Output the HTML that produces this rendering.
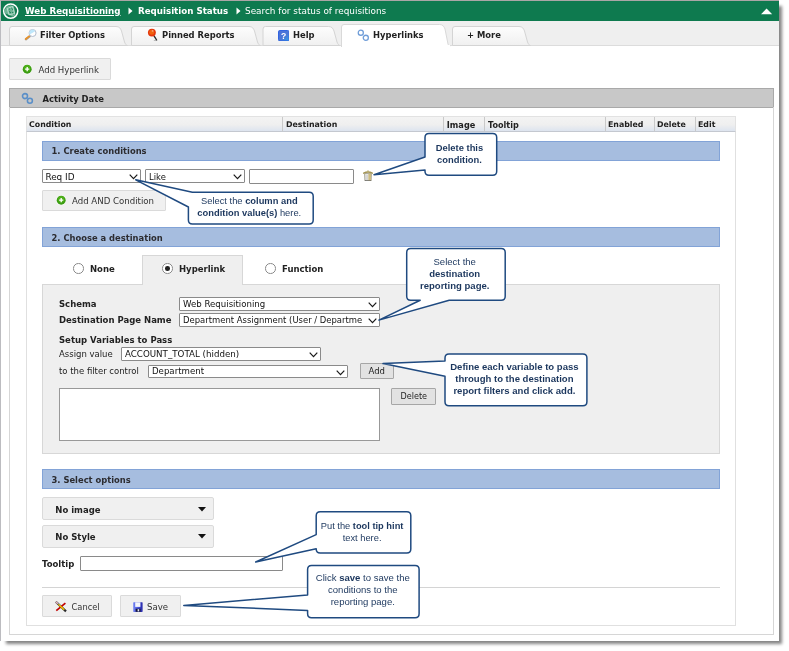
<!DOCTYPE html>
<html>
<head>
<meta charset="utf-8">
<title>Web Requisitioning - Requisition Status</title>
<style>
html,body{margin:0;padding:0;}
body{width:789px;height:651px;background:#fff;position:relative;overflow:hidden;font-family:"DejaVu Sans","Liberation Sans",sans-serif;font-size:8.4px;color:#222;}
#root{position:absolute;left:0;top:0;width:789px;height:651px;overflow:hidden;will-change:transform;}
.a{position:absolute;box-sizing:border-box;}
.t{position:absolute;white-space:nowrap;line-height:12px;height:12px;}
.b{font-weight:bold;}
#win{left:0;top:0;width:779px;height:641px;background:#fff;box-shadow:4.5px 4.5px 3px -1.5px #858585;border-top:1px solid #aaa6a6;border-left:1px solid #bcbcc0;}
#green{left:1px;top:1px;width:778px;height:20px;background:#0e7a4f;}
#strip{left:1px;top:21px;width:778px;height:25px;background:#efefef;border-bottom:1px solid #dcdcdc;}
.btn{position:absolute;box-sizing:border-box;background:#f0f0f0;border:1px solid #dadada;border-radius:1px;}
.bar{position:absolute;box-sizing:border-box;background:#a6bddf;border:1px solid #82a3d7;left:42px;width:678px;height:20px;}
.sel{position:absolute;box-sizing:border-box;background:#fff;border:1px solid #8a8a8a;border-radius:1px;}
.sel svg{position:absolute;right:1.8px;top:3.5px;}
.co{position:absolute;font-family:"Liberation Sans",sans-serif;font-size:9.55px;line-height:12px;color:#1b365d;text-align:center;white-space:nowrap;}
.co b{color:#1b365d;}
.tb{font-size:8.38px;color:#222;}
.vs{top:117px;width:1px;height:14px;background:#c9c9c9;}
.th{top:119px;font-size:7.85px;color:#222;}
.r{font-size:8.6px;color:#333;}
.bt{font-size:8.37px;color:#2c2c30;}
.st{font-size:8.6px;color:#111;line-height:12px;}
.rt{font-size:8.5px;}
.lb{font-size:8.5px;}
.r2{font-size:8.5px;color:#222;}
.rad{position:absolute;box-sizing:border-box;width:10.5px;height:10.5px;border:1px solid #8a8a8a;border-radius:50%;background:#fff;}
.rad i{position:absolute;left:1.9px;top:1.9px;width:4.7px;height:4.7px;border-radius:50%;background:#222;}
</style>
</head>
<body>
<div id="root">
<div id="win" class="a"></div>
<div id="green" class="a"></div>
<div id="strip" class="a"></div>

<!-- header text -->
<svg class="a" style="left:2px;top:2px" width="18" height="18" viewBox="0 0 18 18"><circle cx="8.6" cy="9.1" r="5.9" fill="#6fb596"/><path d="M4.2 12.2 L9.5 14.6 L6 15 Z M12.6 5 L14.6 8.5 L13.8 12 Z M6.5 6.2 L8 7.4 M9.5 5.5 L11 8 M7 9.5 L9 11 M10.5 10 L11.5 12.5" fill="#0e7a4f" stroke="#0e7a4f" stroke-width="0.9"/><path d="M5.2 6.5 L10.5 4.6 L12.6 11.4 L7 12.8 Z" fill="none" stroke="#d9efe5" stroke-width="0.7"/><circle cx="8.7" cy="9.1" r="7.1" fill="none" stroke="#fff" stroke-width="1.5"/></svg>
<div class="t b" id="h1" style="left:25px;top:4.6px;font-size:8.72px;color:#fff;text-decoration:underline;">Web Requisitioning</div>
<div class="t b" id="h2" style="left:138px;top:4.6px;font-size:8.7px;color:#fff;">Requisition Status</div>
<div class="t" id="h3" style="left:245px;top:5.1px;font-size:8.9px;color:#fff;">Search for status of requisitions</div>
<svg class="a" style="left:128px;top:7px" width="5" height="8"><path d="M0.5 0.5 L4.5 4 L0.5 7.5 Z" fill="#fff"/></svg>
<svg class="a" style="left:235.5px;top:7px" width="5" height="8"><path d="M0.5 0.5 L4.5 4 L0.5 7.5 Z" fill="#fff"/></svg>
<svg class="a" style="left:760.8px;top:7.7px" width="12" height="7"><path d="M0 6.2 L5.6 0.6 L11.2 6.2 Z" fill="#fff"/></svg>


<!-- tabs -->
<svg class="a" style="left:0;top:21px" width="779" height="26" viewBox="0 0 779 26">
 <defs><linearGradient id="tg" x1="0" y1="0" x2="0" y2="1"><stop offset="0" stop-color="#fdfdfd"/><stop offset="1" stop-color="#f0f0f0"/></linearGradient></defs>
 <g fill="url(#tg)" stroke="#d4d4d4" stroke-width="1">
  <path d="M9.5 24.5 L9.5 8.0 Q9.5 5.5 12.0 5.5 L116.0 5.5 C119.5 5.5 120.5 7.5 121.5 10.0 L124.5 21.0 C125.3 23.0 126.3 24.5 127.5 24.5 Z"/>
  <path d="M131.5 24.5 L131.5 8.0 Q131.5 5.5 134.0 5.5 L249.0 5.5 C252.5 5.5 253.5 7.5 254.5 10.0 L257.5 21.0 C258.3 23.0 259.3 24.5 260.5 24.5 Z"/>
  <path d="M263 24.5 L263 8.0 Q263 5.5 265.5 5.5 L328.5 5.5 C332.0 5.5 333.0 7.5 334.0 10.0 L337 21.0 C337.8 23.0 338.8 24.5 340 24.5 Z"/>
  <path d="M452.5 24.5 L452.5 8.0 Q452.5 5.5 455.0 5.5 L519.0 5.5 C522.5 5.5 523.5 7.5 524.5 10.0 L527.5 21.0 C528.3 23.0 529.3 24.5 530.5 24.5 Z"/>
 </g>
 <path d="M341.5 26.5 L341.5 6.0 Q341.5 3.5 344.0 3.5 L439.5 3.5 C443.0 3.5 444.0 5.5 445.0 8.0 L448 23.0 C448.8 25.0 449.8 26.5 451 26.5 Z" fill="#fff" stroke="#d9d9d9" stroke-width="1"/>
 <rect x="342" y="24" width="108" height="2" fill="#fff"/>
</svg>
<div class="t b tb" id="t1" style="left:40px;top:29px;">Filter Options</div>
<div class="t b tb" id="t2" style="left:162px;top:29px;">Pinned Reports</div>
<div class="t b tb" id="t3" style="left:293px;top:29px;">Help</div>
<div class="t b tb" id="t4" style="left:373px;top:29px;">Hyperlinks</div>
<div class="t b tb" id="t5" style="left:467px;top:29px;">+ More</div>
<!-- tab icons -->
<svg class="a" style="left:24px;top:28px" width="14" height="14" viewBox="0 0 14 14"><path d="M1.9 11.4 L5.6 8.4" stroke="#5a4a3a" stroke-width="2.2" stroke-linecap="round" opacity="0.5"/><path d="M1.7 11 L5.4 8.1" stroke="#e8922a" stroke-width="1.7" stroke-linecap="round"/><circle cx="8.6" cy="5" r="3.5" fill="#fff" stroke="#a9b7c9" stroke-width="0.9"/><path d="M5.7 6.6 A3.2 3.2 0 0 1 11.2 3.2 Z" fill="#bfe7fb"/></svg>
<svg class="a" style="left:146px;top:27px" width="13" height="15" viewBox="0 0 13 15"><path d="M7.8 13.4 L10 13.6" stroke="#bbb" stroke-width="1"/><path d="M8.2 9.2 L10.6 13" stroke="#2e2e2e" stroke-width="1.4" stroke-linecap="round"/><circle cx="5.9" cy="5.6" r="3.95" fill="#e4360d"/><circle cx="5.7" cy="5.2" r="2.5" fill="#f0620f"/><circle cx="6.6" cy="3.9" r="0.9" fill="#f7a27a"/></svg>
<svg class="a" style="left:277.5px;top:29.5px" width="11.4" height="11.4" viewBox="0 0 11.4 11.4"><defs><linearGradient id="hg" x1="0" y1="0" x2="1" y2="1"><stop offset="0" stop-color="#4a6fda"/><stop offset="0.6" stop-color="#4a78d6"/><stop offset="1" stop-color="#2ba4ea"/></linearGradient></defs><rect x="0.5" y="0.5" width="10.4" height="10.4" rx="1.2" fill="url(#hg)" stroke="#2f63e0" stroke-width="1"/><text x="5.7" y="9" font-family="Liberation Sans, sans-serif" font-weight="bold" font-size="8.6" fill="#fff" text-anchor="middle">?</text></svg>
<svg class="a lnk" style="left:357px;top:29px" width="13" height="13" viewBox="0 0 13 13"><circle cx="3.8" cy="3.7" r="2.55" fill="none" stroke="#6f9dd8" stroke-width="1.3"/><circle cx="8.8" cy="8.8" r="2.55" fill="none" stroke="#6f9dd8" stroke-width="1.3"/></svg>

<!-- add hyperlink -->
<div class="btn" style="left:9px;top:58px;width:102px;height:22px;"></div>
<svg class="a" style="left:22.1px;top:64.4px" width="10.4" height="10.4" viewBox="0 0 10.4 10.4"><circle cx="5.2" cy="5.2" r="5.2" fill="#fff" opacity="0.6"/><circle cx="5.2" cy="5.2" r="4.5" fill="#3b9c12"/><circle cx="5.2" cy="4.3" r="3.2" fill="#52b41c" opacity="0.8"/><path d="M5.2 3.1 V7.3 M3.1 5.2 H7.3" stroke="#fff" stroke-width="1.35"/></svg>
<div class="t r" id="addh" style="left:38.5px;top:63.7px;">Add Hyperlink</div>

<!-- activity date -->
<div class="a" style="left:9px;top:88px;width:765px;height:20px;background:#c8c8c8;border:1px solid #a9a9a9;"></div>
<div class="a" style="left:9px;top:107px;width:765px;height:528px;border:1px solid #d6d6d6;border-top:none;"></div>
<svg class="a lnk" style="left:21.4px;top:91.8px" width="13" height="13" viewBox="0 0 13 13"><circle cx="4" cy="4.1" r="2.5" fill="none" stroke="#5a8fc8" stroke-width="1.55"/><circle cx="8.9" cy="8.8" r="2.5" fill="none" stroke="#5a8fc8" stroke-width="1.55"/></svg>
<div class="t b" id="act" style="left:42.5px;top:92.5px;">Activity Date</div>

<!-- grid -->
<div class="a" style="left:26px;top:116px;width:710px;height:510px;border:1px solid #e0e0e0;"></div>
<div class="a" style="left:26px;top:116px;width:710px;height:16px;background:linear-gradient(#f3f3f3 0%,#efefef 55%,#dde4ef 100%);border:1px solid #e2e2e2;border-bottom:1px solid #c4c8d0;"></div>
<div class="a vs" style="left:282px;"></div><div class="a vs" style="left:443px;"></div><div class="a vs" style="left:484px;"></div><div class="a vs" style="left:605px;"></div><div class="a vs" style="left:654px;"></div><div class="a vs" style="left:695px;"></div>
<div class="t b th" id="c1" style="left:29px;">Condition</div>
<div class="t b th" id="c2" style="left:286px;">Destination</div>
<div class="t b th" id="c3" style="left:446.8px;font-size:8.2px;">Image</div>
<div class="t b th" id="c4" style="left:488px;font-size:8.1px;">Tooltip</div>
<div class="t b th" id="c5" style="left:608px;">Enabled</div>
<div class="t b th" id="c6" style="left:657px;">Delete</div>
<div class="t b th" id="c7" style="left:698px;">Edit</div>


<!-- section 1 -->
<div class="bar" style="top:140.8px;"></div>
<div class="t b bt" id="s1" style="left:51.5px;top:145.4px;">1. Create conditions</div>
<div class="sel" style="left:42px;top:169px;width:99px;height:14px;"><span class="t st" id="q1" style="left:2.4px;top:0.5px;font-size:8.9px;">Req ID</span><svg width="9" height="6" viewBox="0 0 9 6"><path d="M0.7 0.7 L4.5 4.7 L8.3 0.7" fill="none" stroke="#1a1a1a" stroke-width="1.2"/></svg></div>
<div class="sel" style="left:145px;top:169px;width:100px;height:14px;"><span class="t st" id="q2" style="left:3px;top:0.5px;font-size:8.45px;">Like</span><svg width="9" height="6" viewBox="0 0 9 6"><path d="M0.7 0.7 L4.5 4.7 L8.3 0.7" fill="none" stroke="#1a1a1a" stroke-width="1.2"/></svg></div>

<div class="sel" style="left:249px;top:168.5px;width:105px;height:15px;"></div>
<svg class="a" style="left:362.5px;top:169.7px" width="10" height="11.5" viewBox="0 0 10 11.5"><path d="M1.6 3.6 H8.4 L8.1 10.9 H1.9 Z" fill="#ececea" stroke="#85826f" stroke-width="0.7"/><path d="M5.4 3.8 H8.1 L7.8 10.5 H5.4 Z" fill="#cdbb7e"/><path d="M3.2 5 V10 M4.4 5 V10" stroke="#bdbdbd" stroke-width="0.6"/><path d="M0.7 3.1 Q5 0.9 9.3 3.1" fill="none" stroke="#a39454" stroke-width="1.5" stroke-linecap="round"/><path d="M4.2 1.1 H5.8" stroke="#b5a868" stroke-width="1.1"/><path d="M2 10.9 H8.1" stroke="#444" stroke-width="0.8"/></svg>
<div class="btn" style="left:42px;top:189.5px;width:124px;height:21.5px;"></div>
<svg class="a" style="left:56px;top:195px" width="10.4" height="10.4" viewBox="0 0 10.4 10.4"><circle cx="5.2" cy="5.2" r="5.2" fill="#fff" opacity="0.6"/><circle cx="5.2" cy="5.2" r="4.5" fill="#3b9c12"/><circle cx="5.2" cy="4.3" r="3.2" fill="#52b41c" opacity="0.8"/><path d="M5.2 3.1 V7.3 M3.1 5.2 H7.3" stroke="#fff" stroke-width="1.35"/></svg>
<div class="t r" id="addc" style="left:72px;top:194.8px;">Add AND Condition</div>

<!-- section 2 -->
<div class="bar" style="top:227px;"></div>
<div class="t b bt" id="s2" style="left:51.5px;top:231.7px;">2. Choose a destination</div>
<div class="a" style="left:42px;top:283.5px;width:678px;height:170px;background:#efefef;border:1px solid #d7d7d7;"></div>
<div class="a" style="left:142px;top:255px;width:101px;height:30px;background:#efefef;border:1px solid #d7d7d7;border-bottom:none;"></div>
<div class="rad" style="left:73px;top:263px;"></div>
<div class="rad" style="left:162px;top:263px;"><i></i></div>
<div class="rad" style="left:265px;top:263px;"></div>
<div class="t b rt" id="r1" style="left:90px;top:262.5px;">None</div>
<div class="t b rt" id="r2" style="left:179px;top:262.5px;">Hyperlink</div>
<div class="t b rt" id="r3" style="left:282px;top:262.5px;">Function</div>

<div class="t b lb" id="l1" style="left:59px;top:298px;">Schema</div>
<div class="t b lb" id="l2" style="left:59px;top:314px;">Destination Page Name</div>
<div class="t b lb" id="l3" style="left:59px;top:334px;">Setup Variables to Pass</div>
<div class="t r2" id="l4" style="left:59px;top:348px;">Assign value</div>
<div class="t r2" id="l5" style="left:59px;top:365px;">to the filter control</div>
<div class="sel" style="left:179px;top:297px;width:201px;height:13.5px;"><span class="t st" id="q3" style="left:3px;top:-0.5px;">Web Requisitioning</span><svg width="9" height="6" viewBox="0 0 9 6"><path d="M0.7 0.7 L4.5 4.7 L8.3 0.7" fill="none" stroke="#1a1a1a" stroke-width="1.2"/></svg></div>
<div class="sel" style="left:179px;top:313px;width:201px;height:13.5px;"><span class="t st" id="q4" style="left:3px;top:-0.5px;font-size:8.45px;width:179.5px;overflow:hidden;">Department Assignment (User / Departme</span><svg width="9" height="6" viewBox="0 0 9 6"><path d="M0.7 0.7 L4.5 4.7 L8.3 0.7" fill="none" stroke="#1a1a1a" stroke-width="1.2"/></svg></div>
<div class="sel" style="left:121px;top:347px;width:200px;height:13.5px;"><span class="t st" id="q5" style="left:3px;top:-0.2px;font-size:8.7px;">ACCOUNT_TOTAL (hidden)</span><svg width="9" height="6" viewBox="0 0 9 6"><path d="M0.7 0.7 L4.5 4.7 L8.3 0.7" fill="none" stroke="#1a1a1a" stroke-width="1.2"/></svg></div>
<div class="sel" style="left:148px;top:365px;width:200px;height:13px;"><span class="t st" id="q6" style="left:3px;top:-1.3px;">Department</span><svg width="9" height="6" viewBox="0 0 9 6"><path d="M0.7 0.7 L4.5 4.7 L8.3 0.7" fill="none" stroke="#1a1a1a" stroke-width="1.2"/></svg></div>

<div class="a" style="left:360px;top:363.2px;width:34px;height:16.2px;background:#e2e2e2;border:1px solid #a6a6a6;border-radius:1px;"></div>
<div class="t r2" id="badd" style="left:368.5px;top:364.5px;">Add</div>
<div class="a" style="left:59px;top:388px;width:321px;height:52.5px;background:#fff;border:1px solid #989898;"></div>
<div class="a" style="left:391px;top:388px;width:45px;height:16.5px;background:#e2e2e2;border:1px solid #a6a6a6;border-radius:1px;"></div>
<div class="t r2" id="bdel" style="left:400.5px;top:390px;font-size:8.1px;">Delete</div>

<!-- section 3 -->
<div class="bar" style="top:469.3px;"></div>
<div class="t b bt" id="s3" style="left:51.5px;top:474px;">3. Select options</div>
<div class="btn" style="left:42px;top:497.2px;width:172px;height:23.3px;border-radius:2px;"></div>
<div class="btn" style="left:42px;top:525px;width:172px;height:23px;border-radius:2px;"></div>
<div class="t b lb" id="o1" style="left:55.3px;top:503.5px;">No image</div>
<div class="t b lb" id="o2" style="left:55.3px;top:530.5px;">No Style</div>
<svg class="a" style="left:198px;top:506.5px" width="8" height="5"><path d="M0 0 H8 L4 4.6 Z" fill="#111"/></svg>
<svg class="a" style="left:198px;top:534px" width="8" height="5"><path d="M0 0 H8 L4 4.6 Z" fill="#111"/></svg>
<div class="t b lb" id="o3" style="left:42px;top:557.5px;">Tooltip</div>
<div class="sel" style="left:80px;top:556px;width:203px;height:15px;"></div>
<div class="a" style="left:42px;top:587px;width:678px;height:1px;background:#d4d4d4;"></div>
<div class="btn" style="left:42px;top:595.2px;width:70px;height:22px;"></div>
<div class="btn" style="left:120px;top:595.2px;width:61px;height:22px;"></div>
<svg class="a" style="left:54px;top:600px" width="14" height="13" viewBox="0 0 14 13"><path d="M1.8 1.8 L12 11.4" stroke="#2a2a2a" stroke-width="2.2" stroke-linecap="butt"/><path d="M4.4 4.2 L10.3 9.8" stroke="#f2c400" stroke-width="1.5"/><path d="M1.9 1.9 L3.9 3.8" stroke="#e9b9c0" stroke-width="1.5"/><path d="M3.9 2.6 L7 5.4" stroke="#aab8cc" stroke-width="0.8"/><path d="M11.4 3.1 L2.3 10.7" stroke="#c00000" stroke-width="1.7"/><path d="M6.1 5.9 L8.4 8" stroke="#f2c400" stroke-width="1.4"/></svg>
<div class="t r" id="bc" style="left:71.5px;top:600.5px;font-size:8.3px;">Cancel</div>
<svg class="a" style="left:132.9px;top:601.8px" width="9.8" height="10.1" viewBox="0 0 9.8 10.1"><defs><linearGradient id="sg" x1="0" y1="0" x2="1" y2="0"><stop offset="0" stop-color="#7686f2"/><stop offset="0.5" stop-color="#4a58de"/><stop offset="1" stop-color="#2626a8"/></linearGradient></defs><rect x="0.2" y="0.2" width="9.4" height="9.7" rx="0.6" fill="url(#sg)"/><rect x="2.2" y="0.3" width="5.2" height="4.6" fill="#f4f6fc"/><rect x="2.6" y="6.7" width="5" height="3.1" fill="#15153a"/><rect x="4.6" y="7.2" width="1.6" height="2.2" fill="#e8ecf8"/></svg>
<div class="t r" id="bs" style="left:147px;top:600.5px;">Save</div>

<!-- callouts -->
<svg class="a" style="left:0;top:0" width="789" height="651" viewBox="0 0 789 651"><g fill="#fff" stroke="#1f4a80" stroke-width="1.5" stroke-linejoin="round">
<path d="M192.4 192.2 H309.2 Q313.2 192.2 313.2 196.2 V219.9 Q313.2 223.9 309.2 223.9 H192.4 Q188.4 223.9 188.4 219.9 V207 L135.7 179.8 Z"/>
<path d="M429 133.5 H492.7 Q496.7 133.5 496.7 137.5 V171.3 Q496.7 175.3 492.7 175.3 H429 Q425 175.3 425 171.3 V170 L374 174.7 L425 157 V137.5 Q425 133.5 429 133.5 Z"/>
<path d="M410.7 248.5 H501.2 Q505.2 248.5 505.2 252.5 V296.2 Q505.2 300.2 501.2 300.2 H449.2 L378.9 320.1 L420.2 300.2 H410.7 Q406.7 300.2 406.7 296.2 V252.5 Q406.7 248.5 410.7 248.5 Z"/>
<path d="M449 354 H582.9 Q586.9 354 586.9 358 V401.8 Q586.9 405.8 582.9 405.8 H449 Q445 405.8 445 401.8 V376.3 L383 363.6 L445 361 V358 Q445 354 449 354 Z"/>
<path d="M320.2 511.8 H406.8 Q410.8 511.8 410.8 515.8 V549.1 Q410.8 553.1 406.8 553.1 H320.2 Q316.2 553.1 316.2 549.1 V548.8 L255.7 562 L316.2 534.6 V515.8 Q316.2 511.8 320.2 511.8 Z"/>
<path d="M311.6 565.5 H415.1 Q419.1 565.5 419.1 569.5 V613.7 Q419.1 617.7 415.1 617.7 H311.6 Q307.6 617.7 307.6 613.7 V610.4 L183.8 605.4 L307.6 594.9 V569.5 Q307.6 565.5 311.6 565.5 Z"/>
</g></svg>
<div class="co" id="k1" style="font-size:9.35px;left:149.3px;width:200px;top:195.0px;">Select the <b>column and</b><br><b>condition value(s)</b> here.</div>
<div class="co" id="k2" style="font-size:9.4px;left:359.5px;width:200px;top:141.6px;"><b>Delete this</b><br><b>condition.</b></div>
<div class="co" id="k3" style="left:354.7px;width:200px;top:256.0px;">Select the<br><b>destination</b><br><b>reporting page.</b></div>
<div class="co" id="k4" style="left:414.4px;width:200px;top:360.7px;"><b>Define each variable to pass</b><br><b>through to the destination</b><br><b>report filters and click add.</b></div>
<div class="co" id="k5" style="font-size:9.3px;left:262.1px;width:200px;top:519.6px;">Put the <b>tool tip hint</b><br>text here.</div>
<div class="co" id="k6" style="left:262.8px;width:200px;top:572.3px;">Click <b>save</b> to save the<br>conditions to the<br>reporting page.</div>

</div>
</body>
</html>
